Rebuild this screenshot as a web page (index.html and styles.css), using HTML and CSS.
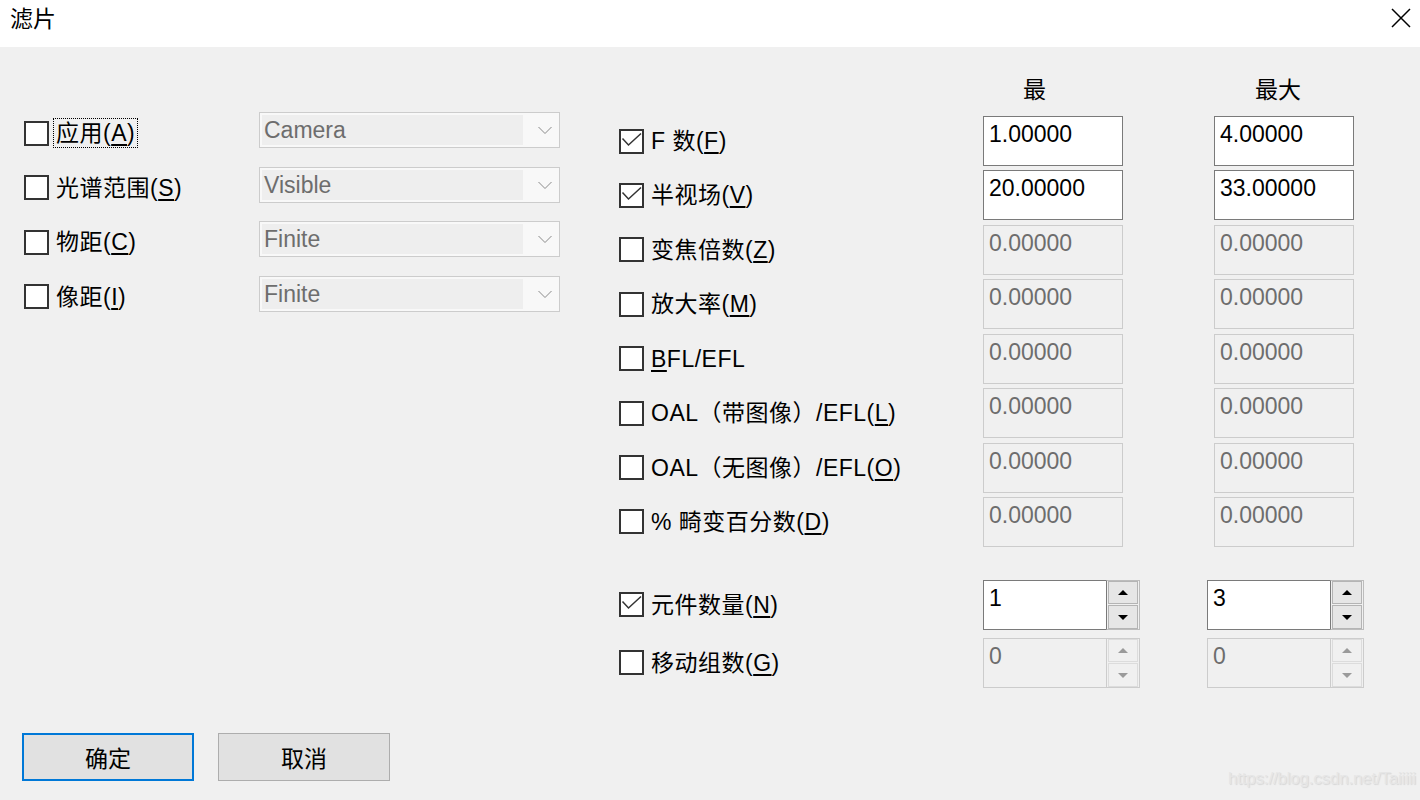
FILE: index.html
```html
<!DOCTYPE html>
<html lang="zh-CN">
<head>
    <meta charset="UTF-8">
    <title>滤片</title>
    <link rel="stylesheet" href="styles.css">
</head>
<body>
    <div class="dialog">
        <!-- title bar -->
        <div class="titlebar">
            <span class="title">滤片</span>
            <span class="close">
                <svg width="20" height="20" viewBox="0 0 20 20"><path d="M1 1 L19 19 M19 1 L1 19" stroke="#000" stroke-width="1.5" fill="none"/></svg>
            </span>
        </div>

        <div class="main">
            <!-- left: dropdown filters -->
            <div class="left">
                <div class="lrow">
                    <div class="check"><span class="box"></span><span class="label focus">应用(<u>A</u>)</span></div>
                    <div class="select"><span class="value">Camera</span><svg class="chev" width="16" height="10" viewBox="0 0 16 10"><path d="M1.5 2 L8 8.5 L14.5 2" stroke="#8a8a8a" stroke-width="1" fill="none"/></svg></div>
                </div>
                <div class="lrow">
                    <div class="check"><span class="box"></span><span class="label">光谱范围(<u>S</u>)</span></div>
                    <div class="select"><span class="value">Visible</span><svg class="chev" width="16" height="10" viewBox="0 0 16 10"><path d="M1.5 2 L8 8.5 L14.5 2" stroke="#8a8a8a" stroke-width="1" fill="none"/></svg></div>
                </div>
                <div class="lrow">
                    <div class="check"><span class="box"></span><span class="label">物距(<u>C</u>)</span></div>
                    <div class="select"><span class="value">Finite</span><svg class="chev" width="16" height="10" viewBox="0 0 16 10"><path d="M1.5 2 L8 8.5 L14.5 2" stroke="#8a8a8a" stroke-width="1" fill="none"/></svg></div>
                </div>
                <div class="lrow">
                    <div class="check"><span class="box"></span><span class="label">像距(<u>I</u>)</span></div>
                    <div class="select"><span class="value">Finite</span><svg class="chev" width="16" height="10" viewBox="0 0 16 10"><path d="M1.5 2 L8 8.5 L14.5 2" stroke="#8a8a8a" stroke-width="1" fill="none"/></svg></div>
                </div>
            </div>

            <!-- right: min / max ranges -->
            <div class="right">
                <div class="heads">
                    <span class="head h1">最</span>
                    <span class="head h2">最大</span>
                </div>

                <div class="rows">
                    <div class="rrow">
                        <div class="check"><span class="box"><svg width="21" height="21" viewBox="0 0 21 21"><path d="M1.5 7.5 L7.5 14 L20 2.5" stroke="#333" stroke-width="1.5" fill="none"/></svg></span><span class="label">F 数(<u>F</u>)</span></div>
                        <div class="field"><div class="num">1.00000</div></div>
                        <div class="field f2"><div class="num">4.00000</div></div>
                    </div>
                    <div class="rrow">
                        <div class="check"><span class="box"><svg width="21" height="21" viewBox="0 0 21 21"><path d="M1.5 7.5 L7.5 14 L20 2.5" stroke="#333" stroke-width="1.5" fill="none"/></svg></span><span class="label">半视场(<u>V</u>)</span></div>
                        <div class="field"><div class="num">20.00000</div></div>
                        <div class="field f2"><div class="num">33.00000</div></div>
                    </div>
                    <div class="rrow">
                        <div class="check"><span class="box"></span><span class="label">变焦倍数(<u>Z</u>)</span></div>
                        <div class="field"><div class="num off">0.00000</div></div>
                        <div class="field f2"><div class="num off">0.00000</div></div>
                    </div>
                    <div class="rrow">
                        <div class="check"><span class="box"></span><span class="label">放大率(<u>M</u>)</span></div>
                        <div class="field"><div class="num off">0.00000</div></div>
                        <div class="field f2"><div class="num off">0.00000</div></div>
                    </div>
                    <div class="rrow">
                        <div class="check"><span class="box"></span><span class="label"><u>B</u>FL/EFL</span></div>
                        <div class="field"><div class="num off">0.00000</div></div>
                        <div class="field f2"><div class="num off">0.00000</div></div>
                    </div>
                    <div class="rrow">
                        <div class="check"><span class="box"></span><span class="label">OAL（带图像）/EFL(<u>L</u>)</span></div>
                        <div class="field"><div class="num off">0.00000</div></div>
                        <div class="field f2"><div class="num off">0.00000</div></div>
                    </div>
                    <div class="rrow">
                        <div class="check"><span class="box"></span><span class="label">OAL（无图像）/EFL(<u>O</u>)</span></div>
                        <div class="field"><div class="num off">0.00000</div></div>
                        <div class="field f2"><div class="num off">0.00000</div></div>
                    </div>
                    <div class="rrow">
                        <div class="check"><span class="box"></span><span class="label">% 畸变百分数(<u>D</u>)</span></div>
                        <div class="field"><div class="num off">0.00000</div></div>
                        <div class="field f2"><div class="num off">0.00000</div></div>
                    </div>
                </div>

                <div class="spins">
                    <div class="rrow">
                        <div class="check"><span class="box"><svg width="21" height="21" viewBox="0 0 21 21"><path d="M1.5 7.5 L7.5 14 L20 2.5" stroke="#333" stroke-width="1.5" fill="none"/></svg></span><span class="label">元件数量(<u>N</u>)</span></div>
                        <div class="field">
                            <div class="spin">
                                <div class="spin-val">1</div>
                                <div class="spin-btns"><span class="sb"><i class="up"></i></span><span class="sb"><i class="down"></i></span></div>
                            </div>
                        </div>
                        <div class="field">
                            <div class="spin">
                                <div class="spin-val">3</div>
                                <div class="spin-btns"><span class="sb"><i class="up"></i></span><span class="sb"><i class="down"></i></span></div>
                            </div>
                        </div>
                    </div>
                    <div class="rrow">
                        <div class="check"><span class="box"></span><span class="label">移动组数(<u>G</u>)</span></div>
                        <div class="field">
                            <div class="spin off">
                                <div class="spin-val">0</div>
                                <div class="spin-btns"><span class="sb"><i class="up"></i></span><span class="sb"><i class="down"></i></span></div>
                            </div>
                        </div>
                        <div class="field">
                            <div class="spin off">
                                <div class="spin-val">0</div>
                                <div class="spin-btns"><span class="sb"><i class="up"></i></span><span class="sb"><i class="down"></i></span></div>
                            </div>
                        </div>
                    </div>
                </div>
            </div>
        </div>

        <!-- buttons -->
        <div class="footer">
            <button class="btn default" type="button">确定</button>
            <button class="btn" type="button">取消</button>
        </div>

        <span class="watermark">https://blog.csdn.net/Taiiiii</span>
    </div>
</body>
</html>
```

FILE: styles.css
```css
body {
    margin: 0;
    padding: 0;
    background-color: #f0f0f0;
    font-family: "Liberation Sans", "Noto Sans CJK SC", sans-serif;
    font-size: 23px;
    color: #000000;
}

.dialog {
    position: relative;
    width: 1420px;
    height: 800px;
    overflow: hidden;
    background-color: #f0f0f0;
}

/* title bar */
.titlebar {
    height: 47px;
    background-color: #ffffff;
    display: flex;
    justify-content: space-between;
    align-items: flex-start;
}

.titlebar .title {
    padding: 6px 0 0 10px;
    line-height: 26px;
}

.titlebar .close {
    padding: 8px 9px 0 0;
}

.titlebar .close svg {
    display: block;
}

/* layout */
.main {
    display: flex;
    padding-top: 30px;
}

.left {
    flex-shrink: 0;
    width: 595px;
    padding: 35px 0 0 24px;
    display: flex;
    flex-direction: column;
    gap: 18.5px;
}

.right {
    flex-shrink: 0;
    display: flex;
    flex-direction: column;
}

/* checkbox + label */
.check {
    display: flex;
    align-items: center;
    gap: 7px;
}

.box {
    width: 21px;
    height: 21px;
    border: 2px solid #333333;
    background-color: #ffffff;
    flex-shrink: 0;
}

.box svg {
    display: block;
}

.label {
    line-height: 26px;
    white-space: nowrap;
    letter-spacing: 0.5px;
}

.label u {
    text-underline-offset: 3px;
}

.label.focus {
    outline: 1px dotted #000000;
    outline-offset: 1px;
    padding: 0 1px;
    margin-left: -1px;
}

/* left rows */
.lrow {
    display: flex;
    align-items: center;
    height: 36px;
}

.lrow .check {
    width: 235px;
    padding-top: 6px;
}

.select {
    width: 299px;
    height: 34px;
    border: 1px solid #cccccc;
    background-color: #f8f8f8;
    display: flex;
    align-items: center;
}

.select .value {
    margin: 2px;
    width: 259px;
    height: 30px;
    line-height: 30px;
    padding-left: 2px;
    background-color: #eeeeee;
    color: #6d6d6d;
}

.select .chev {
    margin-left: 12px;
}

/* right side */
.heads {
    display: flex;
    height: 26px;
    line-height: 26px;
    margin-bottom: 13px;
}

.head.h1 {
    margin-left: 404px;
}

.head.h2 {
    margin-left: 209px;
}

.rows {
    display: flex;
    flex-direction: column;
    gap: 4.43px;
}

.spins {
    display: flex;
    flex-direction: column;
    gap: 8px;
    margin-top: 33px;
}

.rrow {
    display: flex;
    height: 50px;
    align-items: center;
}

.rrow .check {
    width: 364px;
}

.field {
    width: 224px;
    height: 50px;
}

.field.f2 {
    padding-left: 7px;
    width: 140px;
}

.num {
    width: 133px;
    height: 48px;
    border: 1px solid #7a7a7a;
    background-color: #ffffff;
    padding-left: 5px;
    line-height: 34px;
}

.num.off {
    border-color: #cccccc;
    background-color: #f0f0f0;
    color: #6d6d6d;
}

/* spinner */
.spin {
    width: 157px;
    height: 50px;
    display: flex;
}

.spin-val {
    width: 118px;
    height: 48px;
    border: 1px solid #7a7a7a;
    border-right: none;
    background-color: #ffffff;
    padding-left: 5px;
    line-height: 34px;
}

.spin-btns {
    width: 34px;
    height: 50px;
    border: 1px solid #bcbcbc;
    box-sizing: border-box;
    border-left: 1px solid #7a7a7a;
    padding: 0 1px;
    display: flex;
    flex-direction: column;
    justify-content: center;
    gap: 1px;
    background-color: #f0f0f0;
}

.sb {
    height: 22px;
    border: 1px solid #b4b4b4;
    background-color: #e6e6e6;
    display: flex;
    align-items: center;
    justify-content: center;
}

.sb i {
    width: 0;
    height: 0;
    border-left: 5px solid transparent;
    border-right: 5px solid transparent;
}

.sb i.up {
    border-bottom: 5px solid #000000;
}

.sb i.down {
    border-top: 5px solid #000000;
}

.spin.off .spin-val {
    border-color: #cccccc;
    background-color: #f0f0f0;
    color: #6d6d6d;
}

.spin.off .spin-btns {
    border-color: #cccccc;
}

.spin.off .sb {
    border-color: #dcdcdc;
    background-color: #f0f0f0;
}

.spin.off .sb i.up {
    border-bottom-color: #9a9a9a;
}

.spin.off .sb i.down {
    border-top-color: #9a9a9a;
}

/* footer buttons */
.footer {
    display: flex;
    gap: 24px;
    padding-left: 22px;
    margin-top: 45px;
}

.btn {
    width: 172px;
    height: 48px;
    border: 1px solid #adadad;
    background-color: #e1e1e1;
    font-family: "Liberation Sans", "Noto Sans CJK SC", sans-serif;
    font-size: 23px;
    color: #000000;
    padding: 0;
}

.btn.default {
    border: 2px solid #0078d7;
}

.watermark {
    position: absolute;
    left: 1228px;
    top: 769px;
    font-size: 17px;
    color: #e6e6e6;
    text-shadow: 1px 1px 1px #d6d6d6;
    letter-spacing: -0.2px;
}
```
